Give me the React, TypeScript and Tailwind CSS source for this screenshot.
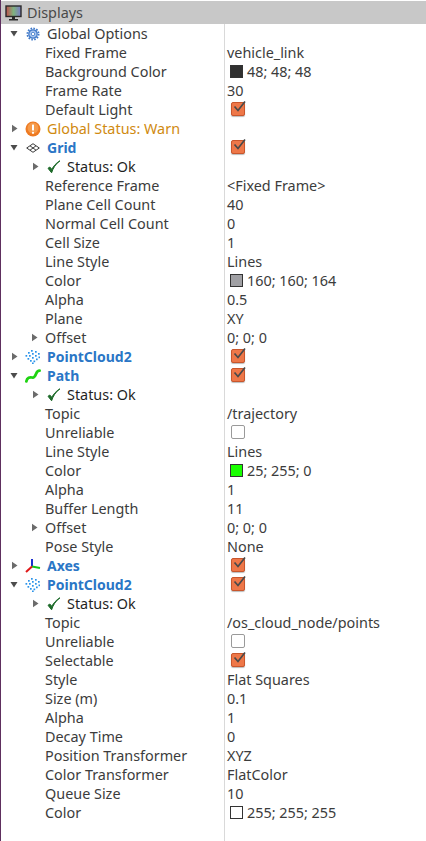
import type { ReactNode } from "react";

type Row = {
  label: string;
  level?: 0 | 1 | 2;
  arrow?: "open" | "closed";
  icon?: ReactNode;
  tone?: "blue" | "warn";
  value?: string;
  swatch?: string;
  check?: "on" | "off";
};

const MonitorIcon = () => (
  <svg width="17" height="16" viewBox="0 0 17 16" className="shrink-0">
    <defs>
      <linearGradient id="screen" x1="0" x2="1" y1="0" y2="0">
        <stop offset="0" stopColor="#c0504d" />
        <stop offset="0.5" stopColor="#7fb27f" />
        <stop offset="1" stopColor="#7a7ac8" />
      </linearGradient>
    </defs>
    <rect x="1" y="1" width="15" height="10.5" fill="url(#screen)" stroke="#2a2a2a" strokeWidth="1.4" />
    <rect x="7" y="12" width="3" height="2" fill="#2a2a2a" />
    <rect x="4" y="14" width="9" height="1.5" fill="#2a2a2a" />
  </svg>
);

const GearIcon = () => (
  <svg width="14" height="14" viewBox="0 0 14 14">
    <circle cx="7" cy="7" r="4.2" fill="#a9c6ee" stroke="#3f78c8" strokeWidth="1.2" />
    <circle cx="7" cy="7" r="5.6" fill="none" stroke="#3f78c8" strokeWidth="1.8" strokeDasharray="1.6 1.3" />
    <circle cx="7" cy="7" r="1.7" fill="#fff" stroke="#3f78c8" strokeWidth="0.8" />
  </svg>
);

const WarnIcon = () => (
  <svg width="16" height="16" viewBox="0 0 16 16">
    <circle cx="8" cy="8" r="7.5" fill="#ee7a22" />
    <circle cx="8" cy="7" r="5.5" fill="#f59a4a" />
    <rect x="7" y="3.5" width="2" height="6" rx="0.6" fill="#fff" />
    <rect x="7" y="10.8" width="2" height="2" rx="0.6" fill="#fff" />
  </svg>
);

const GridIcon = () => (
  <svg width="14" height="10" viewBox="0 0 14 10">
    <path d="M7 .7 13.3 5 7 9.3.7 5Z M4 2.8 10 7.2 M10 2.8 4 7.2" fill="none" stroke="#3a3a3a" strokeWidth="1" />
  </svg>
);

const CloudIcon = () => (
  <svg width="15" height="14" viewBox="0 0 15 14" fill="#2a93ea">
    {[
      [6, 0], [10, 1], [3, 2], [7, 3], [13, 3], [0.5, 5], [4, 5], [10, 5], [13.5, 6.5], [7, 7], [2.5, 8], [11, 8.5], [5, 10], [8.5, 10.5], [7, 12.5],
    ].map(([x, y]) => (
      <rect key={`${x}-${y}`} x={x} y={y} width="1.7" height="1.7" />
    ))}
  </svg>
);

const PathIcon = () => (
  <svg width="16" height="14" viewBox="0 0 16 14">
    <path d="M1.4 12.3C2 8.5 5 8 7 8.5S10 7.5 11 5 13 1.7 14.6 1.7" fill="none" stroke="#1fd312" strokeWidth="2.8" strokeLinecap="round" />
  </svg>
);

const AxesIcon = () => (
  <svg width="17" height="15" viewBox="0 0 17 15">
    <path d="M8 8.5V1" stroke="#1a2fd0" strokeWidth="2" fill="none" />
    <path d="M8 8.5 16 10" stroke="#18c818" strokeWidth="2" fill="none" />
    <path d="M8 8.5 2 14" stroke="#e01818" strokeWidth="2" fill="none" />
  </svg>
);

const CheckMark = () => (
  <svg width="14" height="14" viewBox="0 0 14 14" className="shrink-0">
    <path d="M1 8.3 4.6 12.8C6 8.5 8.5 4 13 .8 9 3 6.5 6.3 4.8 9.3L2.8 7Z" fill="#1e6b2a" stroke="#1e6b2a" strokeWidth="1" strokeLinejoin="round" />
  </svg>
);

const Arrow = ({ dir }: { dir: "open" | "closed" }) => (
  <svg width="9" height="9" viewBox="0 0 9 9" className="shrink-0">
    {dir === "open" ? <path d="M.5 2h7L4 7.5Z" fill="#4c4c4c" /> : <path d="M2 .7 7.5 4.5 2 8.3Z" fill="#6b6b6b" />}
  </svg>
);

const Check = ({ on }: { on: boolean }) =>
  on ? (
    <span className="relative mb-[2px] ml-[4px] block h-[14px] w-[14px] rounded-[2px] border border-[#c9562c] bg-[#ee7748] shadow-[0_1px_1px_#bbb]">
      <svg width="15" height="13" viewBox="0 0 15 13" className="absolute left-[0px] top-[-3px]">
        <path d="M2.5 6.5 6 10.5 13 1.5" fill="none" stroke="#4a4a4a" strokeWidth="1.7" />
      </svg>
    </span>
  ) : (
    <span className="mb-[2px] ml-[4px] block h-[14px] w-[14px] rounded-[2px] border border-[#9a9a9a] bg-white" />
  );

const status: Row = { label: "Status: Ok", level: 2, arrow: "closed", icon: <CheckMark /> };

const rows: Row[] = [
  { label: "Global Options", arrow: "open", icon: <GearIcon /> },
  { label: "Fixed Frame", level: 1, value: "vehicle_link" },
  { label: "Background Color", level: 1, value: "48; 48; 48", swatch: "bg-[#303030]" },
  { label: "Frame Rate", level: 1, value: "30" },
  { label: "Default Light", level: 1, check: "on" },
  { label: "Global Status: Warn", arrow: "closed", icon: <WarnIcon />, tone: "warn" },
  { label: "Grid", arrow: "open", icon: <GridIcon />, tone: "blue", check: "on" },
  status,
  { label: "Reference Frame", level: 1, value: "<Fixed Frame>" },
  { label: "Plane Cell Count", level: 1, value: "40" },
  { label: "Normal Cell Count", level: 1, value: "0" },
  { label: "Cell Size", level: 1, value: "1" },
  { label: "Line Style", level: 1, value: "Lines" },
  { label: "Color", level: 1, value: "160; 160; 164", swatch: "bg-[#a0a0a4]" },
  { label: "Alpha", level: 1, value: "0.5" },
  { label: "Plane", level: 1, value: "XY" },
  { label: "Offset", level: 1, arrow: "closed", value: "0; 0; 0" },
  { label: "PointCloud2", arrow: "closed", icon: <CloudIcon />, tone: "blue", check: "on" },
  { label: "Path", arrow: "open", icon: <PathIcon />, tone: "blue", check: "on" },
  status,
  { label: "Topic", level: 1, value: "/trajectory" },
  { label: "Unreliable", level: 1, check: "off" },
  { label: "Line Style", level: 1, value: "Lines" },
  { label: "Color", level: 1, value: "25; 255; 0", swatch: "bg-[#19ff00]" },
  { label: "Alpha", level: 1, value: "1" },
  { label: "Buffer Length", level: 1, value: "11" },
  { label: "Offset", level: 1, arrow: "closed", value: "0; 0; 0" },
  { label: "Pose Style", level: 1, value: "None" },
  { label: "Axes", arrow: "closed", icon: <AxesIcon />, tone: "blue", check: "on" },
  { label: "PointCloud2", arrow: "open", icon: <CloudIcon />, tone: "blue", check: "on" },
  status,
  { label: "Topic", level: 1, value: "/os_cloud_node/points" },
  { label: "Unreliable", level: 1, check: "off" },
  { label: "Selectable", level: 1, check: "on" },
  { label: "Style", level: 1, value: "Flat Squares" },
  { label: "Size (m)", level: 1, value: "0.1" },
  { label: "Alpha", level: 1, value: "1" },
  { label: "Decay Time", level: 1, value: "0" },
  { label: "Position Transformer", level: 1, value: "XYZ" },
  { label: "Color Transformer", level: 1, value: "FlatColor" },
  { label: "Queue Size", level: 1, value: "10" },
  { label: "Color", level: 1, value: "255; 255; 255", swatch: "bg-white" },
];

function PropertyRow({ row }: { row: Row }) {
  const level = row.level ?? 0;
  return (
    <div className="flex h-[19px] items-center">
      <div className="relative flex h-full w-[223px] shrink-0 items-center">
        {row.arrow && (
          <span className={level === 0 ? "absolute left-[9px] top-[5px] flex" : level === 1 ? "absolute left-[29px] top-[5px] flex" : "absolute left-[30px] top-[5px] flex"}>
            <Arrow dir={row.arrow} />
          </span>
        )}
        {level === 0 && <span className="flex w-[46px] shrink-0 justify-center pl-[17px]">{row.icon}</span>}
        {level === 1 && <span className="w-[44px] shrink-0" />}
        {level === 2 && (
          <span className="flex w-[66px] shrink-0 justify-end pr-[6px]">{row.icon}</span>
        )}
        <span
          className={
            row.tone === "blue"
              ? "text-[14px] font-bold text-[#2a76c6]"
              : row.tone === "warn"
                ? "text-[#d08a10]"
                : level === 2
                  ? "text-[#1f1f1f]"
                  : "text-[#3c3c3c]"
          }
        >
          {row.label}
        </span>
      </div>
      <div className="flex h-full flex-1 items-center border-l border-[#d9d9d9] pl-[2px] text-[#3c3c3c]">
        {row.check && <Check on={row.check === "on"} />}
        {row.swatch && <span className={`ml-[3px] mr-[4px] block h-[13px] w-[13px] border border-[#333] ${row.swatch}`} />}
        {row.value}
      </div>
    </div>
  );
}

export default function App() {
  return (
    <div className="flex h-[841px] w-[426px] overflow-hidden bg-white font-['Noto_Sans',sans-serif] text-[14.4px] leading-[19px]">
      <div className="w-[1px] shrink-0 bg-[#5e2f5e]" />
      <div className="flex min-w-0 flex-1 flex-col">
        <div className="mt-[1px] flex h-[23px] shrink-0 items-center gap-[5px] bg-[#c8c8c8] pl-[4px] text-[#4a4a4a]">
          <MonitorIcon />
          Displays
        </div>
        <div className="flex flex-1 flex-col">
          {rows.map((row, i) => (
            <PropertyRow key={i} row={row} />
          ))}
          <div className="flex flex-1">
            <div className="w-[223px] shrink-0" />
            <div className="flex-1 border-l border-[#d9d9d9]" />
          </div>
        </div>
      </div>
    </div>
  );
}
